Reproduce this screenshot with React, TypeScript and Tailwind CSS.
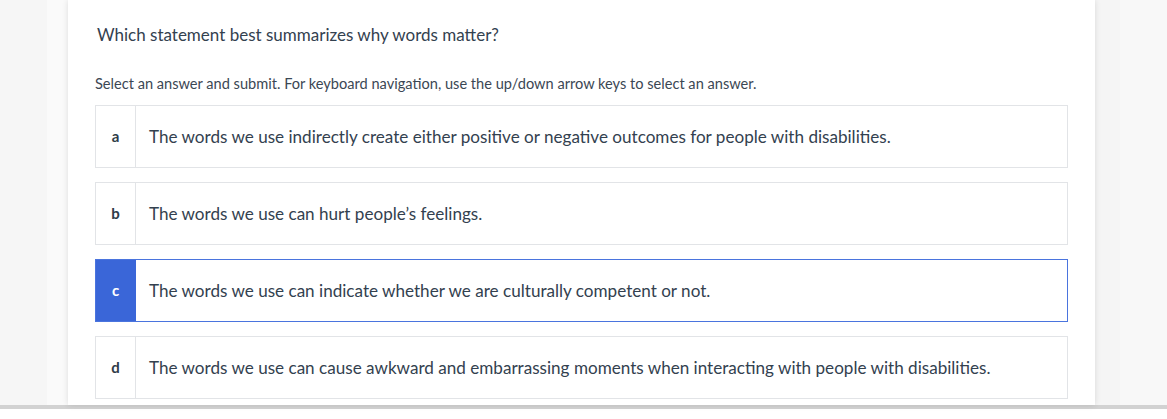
const options = [
  { key: "a", text: "The words we use indirectly create either positive or negative outcomes for people with disabilities." },
  { key: "b", text: "The words we use can hurt people’s feelings." },
  { key: "c", text: "The words we use can indicate whether we are culturally competent or not." },
  { key: "d", text: "The words we use can cause awkward and embarrassing moments when interacting with people with disabilities." },
];

export default function App() {
  const selected = "c";
  return (
    <div className="w-[1167px] h-[419px] overflow-hidden bg-white font-['Lato','Liberation_Sans',sans-serif] text-[#33414f]">
      <div className="flex h-[405px]">
        <div className="w-[47px] shrink-0 bg-[#f6f6f6]" />
        <div className="w-[21px] shrink-0 bg-[#fafafa]" />
        <div className="w-[1027px] shrink-0 bg-white shadow-[0_0_6px_rgba(0,0,0,0.12)] px-[27px] relative z-10">
          <h2 className="pl-[2px] pt-[24px] text-[17px] leading-[22px] whitespace-nowrap">Which statement best summarizes why words matter?</h2>
          <p className="pt-[29px] text-[14.6px] leading-[18px] text-[#3b4754] whitespace-nowrap">
            Select an answer and submit. For keyboard navigation, use the up/down arrow keys to select an answer.
          </p>
          <div className="mt-[12px] flex flex-col gap-[14px]">
            {options.map((o) => {
              const on = o.key === selected;
              return (
                <div
                  key={o.key}
                  className={`flex h-[63px] p-px ${on ? "bg-[#4a74de]" : "bg-[#e2e4e7]"}`}
                >
                  <div
                    className={`w-[39px] shrink-0 flex items-center justify-center text-[15px] font-bold ${
                      on ? "bg-[#3a66d8] text-white" : "bg-white text-[#2e3b48]"
                    }`}
                  >
                    {o.key}
                  </div>
                  <div className={`w-px shrink-0 ${on ? "bg-[#3a66d8]" : "bg-[#e2e4e7]"}`} />
                  <div className="flex-1 flex items-center pl-[13px] bg-white text-[17.1px] whitespace-nowrap">{o.text}</div>
                </div>
              );
            })}
          </div>
        </div>
        <div className="w-[25px] shrink-0 bg-[#f5f5f5]" />
        <div className="flex-1 bg-[#f8f8f8]" />
      </div>
      <div className="h-[4px] bg-[#d2d2d2]" />
    </div>
  );
}
